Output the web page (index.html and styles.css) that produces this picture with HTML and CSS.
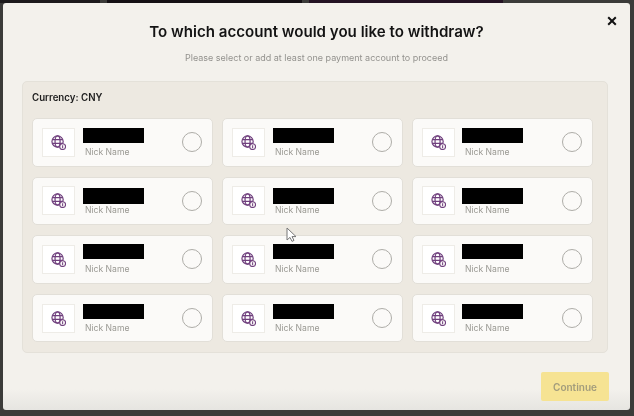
FILE: index.html
```html
<!DOCTYPE html>
<html lang="en">
<head>
<meta charset="utf-8">
<title>Withdraw</title>
<link rel="stylesheet" href="styles.css">
</head>
<body>
<svg width="0" height="0" class="defs">
  <symbol id="globe" viewBox="0 0 16 16">
    <g fill="none" stroke="#6f3f7d" stroke-width="1.3">
      <circle cx="7" cy="7" r="6"/>
      <ellipse cx="7" cy="7" rx="2.7" ry="6"/>
      <path d="M1.4 5h11.2M1.4 9h11.2"/>
    </g>
    <circle cx="12.4" cy="12.4" r="3.1" fill="#fbfaf8" stroke="#6f3f7d" stroke-width="1.1"/>
    <path d="M12.4 10.8v3.2" stroke="#6f3f7d" stroke-width="1.1"/>
  </symbol>
</svg>
<div class="topbar"><span class="seg a"></span><span class="seg b"></span><span class="seg c"></span></div>
<main class="modal">
  <button class="close" aria-label="Close">
    <svg viewBox="0 0 10 10" width="10" height="10"><path d="M1.2 1.2l7.6 7.6M8.8 1.2l-7.6 7.6" stroke="#111" stroke-width="2"/></svg>
  </button>
  <h1 class="title">To which account would you like to withdraw?</h1>
  <p class="subtitle">Please select or add at least one payment account to proceed</p>
  <section class="panel">
    <h2 class="currency">Currency: CNY</h2>
    <div class="grid">
      <div class="card r1"><div class="iconbox"><svg class="globe"><use href="#globe"/></svg></div><div class="info"><div class="acct"></div><div class="nick">Nick Name</div></div><span class="radio"></span><div class="redact"></div></div>
      <div class="card r1"><div class="iconbox"><svg class="globe"><use href="#globe"/></svg></div><div class="info"><div class="acct"></div><div class="nick">Nick Name</div></div><span class="radio"></span><div class="redact"></div></div>
      <div class="card r1 last"><div class="iconbox"><svg class="globe"><use href="#globe"/></svg></div><div class="info"><div class="acct"></div><div class="nick">Nick Name</div></div><span class="radio"></span><div class="redact"></div></div>
      <div class="card r2"><div class="iconbox"><svg class="globe"><use href="#globe"/></svg></div><div class="info"><div class="acct"></div><div class="nick">Nick Name</div></div><span class="radio"></span><div class="redact"></div></div>
      <div class="card r2"><div class="iconbox"><svg class="globe"><use href="#globe"/></svg></div><div class="info"><div class="acct"></div><div class="nick">Nick Name</div></div><span class="radio"></span><div class="redact"></div></div>
      <div class="card r2 last"><div class="iconbox"><svg class="globe"><use href="#globe"/></svg></div><div class="info"><div class="acct"></div><div class="nick">Nick Name</div></div><span class="radio"></span><div class="redact"></div></div>
      <div class="card r3"><div class="iconbox"><svg class="globe"><use href="#globe"/></svg></div><div class="info"><div class="acct"></div><div class="nick">Nick Name</div></div><span class="radio"></span><div class="redact"></div></div>
      <div class="card r3"><div class="iconbox"><svg class="globe"><use href="#globe"/></svg></div><div class="info"><div class="acct"></div><div class="nick">Nick Name</div></div><span class="radio"></span><div class="redact"></div></div>
      <div class="card r3 last"><div class="iconbox"><svg class="globe"><use href="#globe"/></svg></div><div class="info"><div class="acct"></div><div class="nick">Nick Name</div></div><span class="radio"></span><div class="redact"></div></div>
      <div class="card r4"><div class="iconbox"><svg class="globe"><use href="#globe"/></svg></div><div class="info"><div class="acct"></div><div class="nick">Nick Name</div></div><span class="radio"></span><div class="redact"></div></div>
      <div class="card r4"><div class="iconbox"><svg class="globe"><use href="#globe"/></svg></div><div class="info"><div class="acct"></div><div class="nick">Nick Name</div></div><span class="radio"></span><div class="redact"></div></div>
      <div class="card r4 last"><div class="iconbox"><svg class="globe"><use href="#globe"/></svg></div><div class="info"><div class="acct"></div><div class="nick">Nick Name</div></div><span class="radio"></span><div class="redact"></div></div>
    </div>
  </section>
  <div class="footer"><button class="continue">Continue</button></div>
</main>
<svg class="cursor" viewBox="0 0 12 16" width="12" height="16"><path d="M1 1v12l3-2.6 2 4 2-1-2-3.8h4z" fill="#fff" stroke="#777" stroke-width="1"/></svg>
</body>
</html>
```

FILE: styles.css
```css
* { box-sizing: border-box; }
html, body { margin: 0; height: 416px; overflow: hidden; }
body {
  position: relative;
  background: #3b3b39;
  padding: 3px 4px 6px 3px;
  font-family: "Inter", "Liberation Sans", sans-serif;
}
.defs { position: absolute; }
.topbar { position: absolute; left: 0; right: 0; top: 0; height: 3px; display: flex; }
.seg { display: block; height: 3px; }
.a { width: 100px; background: #1c1a1c; }
.b { width: 195px; margin-left: 7px; background: #141014; }
.c { width: 194px; margin-left: 7px; background: #231223; }
.modal {
  position: relative;
  height: 407px;
  border-radius: 3px;
  background: linear-gradient(#f3f1ec 0, #f3f1ec 386px, #e6e5e1 407px);
  padding: 20px 19px 0 19px;
  display: flex;
  flex-direction: column;
  filter: blur(0.3px);
}
.close {
  position: absolute;
  top: 13px;
  right: 13px;
  width: 10px;
  height: 10px;
  padding: 0;
  border: 0;
  background: none;
  display: flex;
}
.title {
  margin: 0;
  text-align: center;
  font-size: 15.1px;
  line-height: 17px;
  font-weight: 600;
  color: #131313;
}
.subtitle {
  margin: 12px 0 0;
  text-align: center;
  font-size: 9px;
  line-height: 12px;
  color: #93928e;
}
.panel {
  margin: 17px 3px 0 0;
  height: 272px;
  background: #ede9e1;
  border: 1px solid #e4e1d9;
  border-radius: 5px;
  padding: 10px 12px 0 9px;
}
.currency {
  margin: 0;
  font-size: 9.7px;
  line-height: 12px;
  font-weight: 600;
  color: #1d1d1d;
}
.grid {
  margin-top: 14px;
  display: grid;
  grid-template-columns: repeat(3, 181px);
  column-gap: 9px;
  grid-auto-rows: 48.5px;
  row-gap: 10.1px;
}
.card {
  position: relative;
  display: flex;
  align-items: center;
  background: #fbfaf8;
  border: 1px solid #e2dfd8;
  border-radius: 5px;
  padding: 0 10px 0 9px;
}
.iconbox {
  width: 33px;
  height: 29px;
  background: #fff;
  border: 1px solid #eeece7;
  display: flex;
  align-items: center;
  justify-content: center;
  flex: none;
}
.globe { width: 15px; height: 15px; }
.info { margin-left: 8px; flex: 1; }
.acct { height: 16px; }
.nick {
  margin: 3px 0 0 2px;
  font-size: 8.6px;
  line-height: 12px;
  color: #9a9993;
}
.redact {
  position: absolute;
  left: 50px;
  width: 61px;
  height: 15.5px;
  background: #000;
}
.last .redact { left: 49px; }
.r1 .redact { top: 8.5px; }
.r2 .redact { top: 10.5px; }
.r3 .redact { top: 7.5px; }
.r4 .redact { top: 9px; }
.radio {
  width: 20px;
  height: 20px;
  border-radius: 50%;
  border: 1.3px solid #aeada8;
  background: #fbfaf8;
  flex: none;
}
.footer {
  display: flex;
  justify-content: flex-end;
  margin-top: 19px;
  padding-right: 2px;
}
.continue {
  width: 68px;
  height: 29px;
  border: 0;
  border-radius: 2px;
  background: #f6e393;
  color: #a29c7c;
  font-family: inherit;
  font-size: 10px;
  font-weight: 600;
  padding: 0;
}
.cursor { position: absolute; left: 286px; top: 227px; }
```
